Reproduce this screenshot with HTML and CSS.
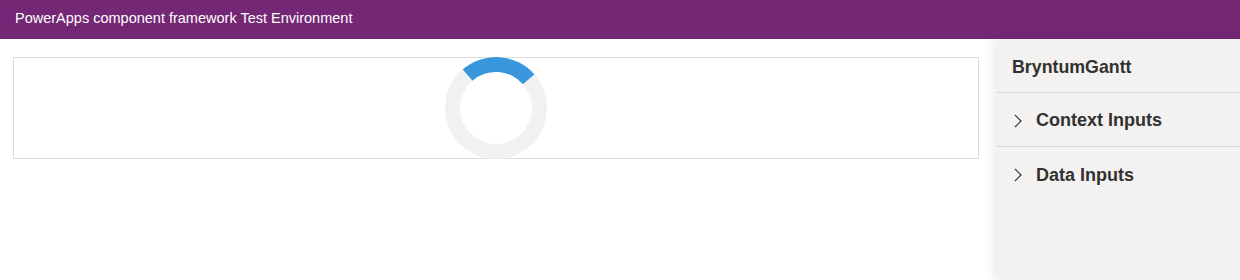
FILE: index.html
```html
<!DOCTYPE html>
<html>
<head>
<meta charset="utf-8">
<link rel="stylesheet" href="styles.css">
</head>
<body>
<header class="topbar">PowerApps component framework Test Environment</header>
<div class="main">
  <div class="stage">
    <div class="control">
      <div class="spinner"></div>
    </div>
  </div>
  <aside class="panel">
    <div class="panel-title">BryntumGantt</div>
    <div class="section">
      <svg class="chev" width="10" height="16" viewBox="0 0 10 16"><path d="M2 2 L8 8 L2 14" fill="none" stroke="#333" stroke-width="1.2"/></svg>
      <span>Context Inputs</span>
    </div>
    <div class="section">
      <svg class="chev" width="10" height="16" viewBox="0 0 10 16"><path d="M2 2 L8 8 L2 14" fill="none" stroke="#333" stroke-width="1.2"/></svg>
      <span>Data Inputs</span>
    </div>
  </aside>
</div>
</body>
</html>
```
FILE: styles.css
```css
html, body {
  margin: 0;
  padding: 0;
  height: 100%;
  overflow: hidden;
}
body {
  font-family: "Liberation Sans", Arial, sans-serif;
  background: #fff;
  color: #333;
  display: flex;
  flex-direction: column;
}
.topbar {
  height: 39px;
  flex: none;
  background: #742774;
  color: #fff;
  font-size: 14.5px;
  line-height: 37px;
  padding-left: 15px;
  box-sizing: border-box;
}
.main {
  flex: 1;
  display: flex;
}
.stage {
  flex: 1;
  padding: 18px 18px 0 13px;
}
.control {
  height: 102px;
  border: 1px solid #dcdcdc;
  box-sizing: border-box;
  display: flex;
  justify-content: center;
}
.spinner {
  width: 102px;
  height: 102px;
  box-sizing: border-box;
  border: 15px solid #f1f1f1;
  border-top-color: #3a96dd;
  border-radius: 50%;
  transform: rotate(4deg);
  margin-top: -1px;
}
.panel {
  width: 243px;
  flex: none;
  background: #f3f2f1;
  box-shadow: -4px 0 10px rgba(0,0,0,0.08);
}
.panel-title {
  height: 54px;
  box-sizing: border-box;
  border-bottom: 1px solid #d6d5d4;
  padding-left: 15px;
  font-size: 17.8px;
  font-weight: bold;
  line-height: 56px;
  color: #323130;
}
.section {
  height: 54px;
  box-sizing: border-box;
  border-bottom: 1px solid #d6d5d4;
  display: flex;
  align-items: center;
  padding-left: 16px;
  padding-top: 2px;
  font-size: 18px;
  font-weight: bold;
  color: #323130;
}
.section:last-child { border-bottom: none; }
.chev { margin-right: 13px; }
```
